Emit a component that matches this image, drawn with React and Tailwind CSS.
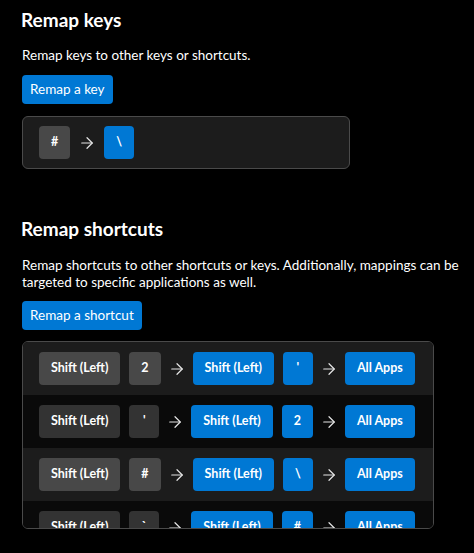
import { ArrowRight } from 'lucide-react';

const shortcuts = [
  { from: ['Shift (Left)', '2'], to: ['Shift (Left)', "'"] },
  { from: ['Shift (Left)', "'"], to: ['Shift (Left)', '2'] },
  { from: ['Shift (Left)', '#'], to: ['Shift (Left)', '\\'] },
  { from: ['Shift (Left)', '`'], to: ['Shift (Left)', '#'] },
];

function Key({ label, accent, dim }) {
  const color = accent ? 'bg-[#0078d4]' : dim ? 'bg-[#333333]' : 'bg-[#484848]';
  return (
    <div className={`shrink-0 whitespace-nowrap h-[33px] min-w-[30px] px-[12px] rounded-[4px] flex items-center justify-center text-[12.5px] font-bold text-white ${color}`}>
      {label}
    </div>
  );
}

function Arrow() {
  return <ArrowRight className="shrink-0 w-[18px] h-[18px] text-[#e6e6e6] -mx-[2px]" strokeWidth={1.6} />;
}

export default function App() {
  return (
    <div className="w-[474px] h-[553px] bg-black text-white overflow-hidden px-[22px] pt-[6px]" style={{ fontFamily: 'Lato, "Open Sans", sans-serif' }}>
      <h2 className="text-[19px] font-bold leading-[28px] -ml-px">Remap keys</h2>
      <p className="text-[13.5px] mt-[12px] leading-[18px]">Remap keys to other keys or shortcuts.</p>
      <button className="mt-[11px] h-[29px] px-[8px] rounded-[4px] bg-[#0078d4] text-[13.5px] text-white">Remap a key</button>
      <div className="mt-[12px] w-[328px] h-[53px] rounded-[6px] border border-[#4a4a4a] bg-[#1c1c1c] flex items-center gap-[10px] px-4">
        <Key label="#" />
        <Arrow />
        <Key label="\" accent />
      </div>

      <h2 className="mt-[46px] text-[19px] font-bold leading-[28px] -ml-px">Remap shortcuts</h2>
      <p className="text-[13.5px] mt-[14px] leading-[17px] w-[444px]">
        Remap shortcuts to other shortcuts or keys. Additionally, mappings can be targeted to specific applications as well.
      </p>
      <button className="mt-[10px] h-[29px] px-[8px] rounded-[4px] bg-[#0078d4] text-[13.5px] text-white">Remap a shortcut</button>
      <div className="mt-[11px] w-[412px] h-[188px] rounded-[6px] border border-[#4a4a4a] overflow-hidden">
        {shortcuts.map((s, i) => {
          const dim = i % 2 === 1;
          return (
            <div key={i} className={`h-[53px] flex items-center gap-[9px] px-4 ${dim ? 'bg-[#0a0a0a]' : 'bg-[#1c1c1c]'}`}>
              <Key label={s.from[0]} dim={dim} />
              <Key label={s.from[1]} dim={dim} />
              <Arrow />
              <Key label={s.to[0]} accent />
              <Key label={s.to[1]} accent />
              <Arrow />
              <Key label="All Apps" accent />
            </div>
          );
        })}
      </div>
    </div>
  );
}
